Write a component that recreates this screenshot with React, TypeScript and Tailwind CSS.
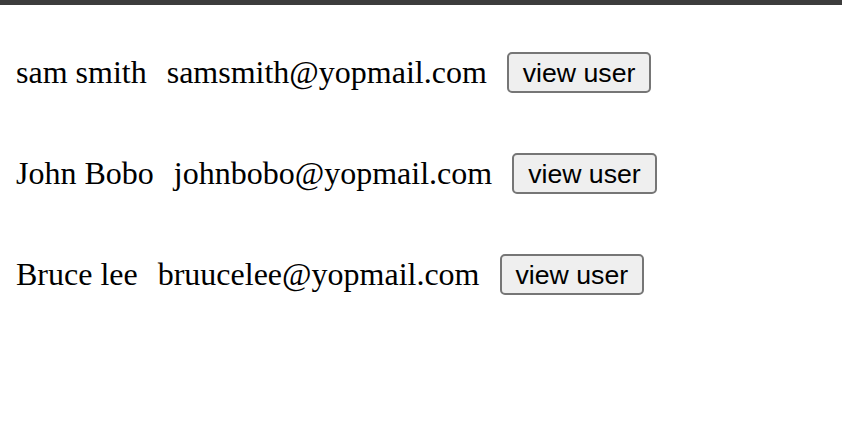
import React from "react";

const users = [
  { name: "sam smith", email: "samsmith@yopmail.com" },
  { name: "John Bobo", email: "johnbobo@yopmail.com" },
  { name: "Bruce lee", email: "bruucelee@yopmail.com" },
];

export default function App() {
  return (
    <div className="w-[842px] h-[434px] bg-white overflow-hidden">
      <div className="h-[5px] bg-[#3c3c3c]" />
      <div className="flex flex-col gap-[60px] pl-4 pt-[47px]">
        {users.map((u) => (
          <div key={u.email} className="flex items-center gap-5 h-[41px]">
            <span className="text-[32px] leading-[37px] text-black [font-family:'Liberation_Serif','Times_New_Roman',serif]">
              {u.name}
            </span>
            <span className="text-[32px] leading-[37px] text-black [font-family:'Liberation_Serif','Times_New_Roman',serif]">
              {u.email}
            </span>
            <button className="h-[41px] px-[14px] bg-[#efefef] border-2 border-[#767676] rounded-[5px] text-[26.67px] leading-[30px] text-black [font-family:'Liberation_Sans',Arial,sans-serif]">
              view user
            </button>
          </div>
        ))}
      </div>
    </div>
  );
}
